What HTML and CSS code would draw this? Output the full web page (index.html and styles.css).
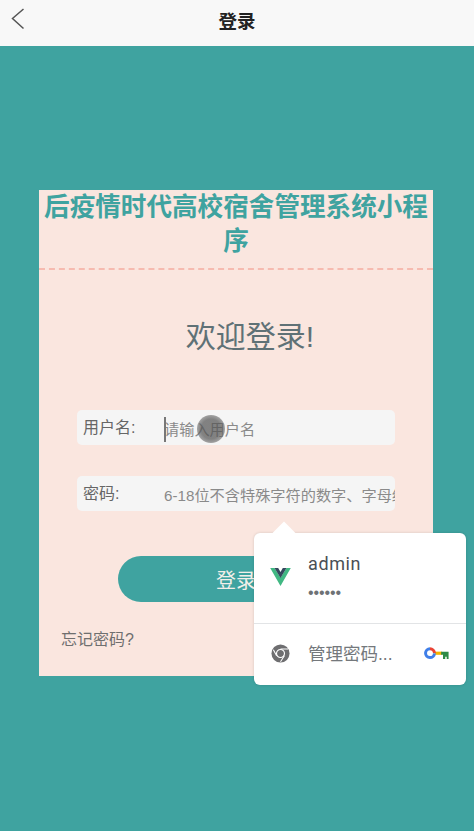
FILE: index.html
```html
<!DOCTYPE html>
<html lang="zh">
<head>
<meta charset="utf-8">
<title>登录</title>
<link rel="stylesheet" href="styles.css">
</head>
<body>
<div class="page">
  <header class="nav">
    <svg class="back" viewBox="0 0 14 22" width="14" height="22"><path d="M12.5 1 L1.5 10.5 L12.5 20.5" fill="none" stroke="#555" stroke-width="1.5"/></svg>
    <h1 class="nav-title">登录</h1>
  </header>
  <main class="main">
    <section class="card">
      <h2 class="sys-title">后疫情时代高校宿舍管理系统小程序</h2>
      <div class="card-body">
        <h3 class="welcome">欢迎登录!</h3>
        <div class="field field-user">
          <span class="label">用户名:</span>
          <span class="caret"></span>
          <span class="placeholder">请输入用户名</span>
          <span class="touch"></span>
        </div>
        <div class="field">
          <span class="label">密码:</span>
          <span class="placeholder placeholder-pw">6-18位不含特殊字符的数字、字母组合</span>
        </div>
        <button class="submit" type="button">登录</button>
        <a class="forgot">忘记密码?</a>
      </div>
    </section>
  </main>
  <aside class="popup">
    <span class="arrow"></span>
    <div class="account">
      <svg class="vue" viewBox="0 0 24 21" width="21" height="18"><path d="M0 0 H5 L12 11.5 L19 0 H24 L12 21 Z" fill="#41b883"/><path d="M5 0 H9.3 L12 4.8 L14.7 0 H19 L12 11.8 Z" fill="#35495e"/></svg>
      <div class="cred">
        <div class="user">admin</div>
        <div class="dots">••••••</div>
      </div>
    </div>
    <div class="manage">
      <svg class="chrome" viewBox="0 0 20 20" width="19" height="19">
        <circle cx="10" cy="10" r="9.5" fill="#6e6e70"/>
        <circle cx="10" cy="10" r="4.2" fill="#6e6e70" stroke="#fff" stroke-width="1.2"/>
        <path d="M10 5.2 H18 M5.9 12.4 L2.5 6 M14.1 12.4 L10 18.6" stroke="#fff" stroke-width="1.1" fill="none"/>
      </svg>
      <span class="manage-text">管理密码...</span>
      <svg class="key" viewBox="0 0 26 14" width="25" height="13">
        <rect x="11" y="5" width="8" height="3.4" fill="#f4b400"/>
        <path d="M18 5 H26 V13 H24 V10.6 H22.4 V13 H20 V8.4 H18 Z" fill="#2e8b47"/>
        <path d="M6 1.8 A5 5 0 0 1 10.8 6.5" fill="none" stroke="#ea4335" stroke-width="3.2"/>
        <path d="M10.8 6.8 A4.8 4.8 0 1 1 6 1.8" fill="none" stroke="#3f7ee8" stroke-width="3.2"/>
      </svg>
    </div>
  </aside>
</div>
</body>
</html>
```
FILE: styles.css
```css
* { box-sizing: border-box; }
html, body { margin: 0; padding: 0; height: 100%; }
body { font-family: "Liberation Sans", "Noto Sans CJK SC", sans-serif; background: #3fa3a0; }
.page { position: relative; width: 474px; height: 831px; overflow: hidden; display: flex; flex-direction: column; }
.nav { height: 46px; background: #f8f8f8; display: flex; align-items: center; justify-content: center; position: relative; flex: none; padding-bottom: 2px; }
.back { position: absolute; left: 11px; top: 8px; }
.nav-title { margin: 0; font-size: 18.5px; font-weight: 700; color: #222; line-height: 1; }
.main { flex: 1; padding: 144px 39px 0; }
.card { width: 394px; height: 486px; background: #fae6df; display: flex; flex-direction: column; }
.sys-title { margin: 0; padding: 0 0 10px; height: 80px; border-bottom: 2px dashed #f6bbb0; text-align: center; font-size: 25.6px; line-height: 34px; font-weight: 700; color: #3fa3a0; }
.card-body { padding: 0 38px; display: flex; flex-direction: column; flex: 1; }
.welcome { margin: 47px 0 0; padding-left: 28px; font-size: 30px; line-height: 40px; font-weight: 400; text-align: center; color: #5f7176; }
.field { position: relative; height: 35px; margin-top: 31px; background: #f5f5f5; border-radius: 5px; display: flex; align-items: center; padding-left: 6px; overflow: hidden; font-size: 16px; }
.field-user { margin-top: 53px; }
.label { width: 81px; flex: none; color: #666; padding-bottom: 3px; }
.placeholder { color: #8a8a8a; white-space: nowrap; font-size: 15.2px; }
.caret { position: absolute; left: 87px; top: 7px; width: 1.5px; height: 25px; background: #777; }
.touch { position: absolute; left: 120px; top: 5px; width: 28px; height: 28px; border-radius: 50%; background: radial-gradient(circle, rgba(85,85,85,.72) 50%, rgba(110,110,110,.5) 80%, rgba(120,120,120,.05) 100%); }
.submit { align-self: center; margin-top: 45px; width: 236px; height: 46px; border: 0; border-radius: 23px; background: #3fa3a0; color: #f3efe9; font-family: inherit; font-size: 20px; padding: 0; }
.forgot { margin: 27px 0 0 -16px; font-size: 16px; line-height: 22px; color: #6f6f6f; }
.popup { position: absolute; left: 254px; top: 533px; width: 212px; height: 152px; background: #fff; border-radius: 6px; box-shadow: 0 0 3px rgba(0,0,0,.15); }
.arrow { position: absolute; left: 21px; top: -9px; width: 18px; height: 18px; background: #fff; transform: rotate(45deg) scale(.9); }
.account { position: relative; height: 91px; border-bottom: 1px solid #e2e4e6; display: flex; align-items: center; padding: 0 0 2px 16px; }
.cred { margin-left: 17px; color: #4a4f55; }
.user { font-family: Roboto, "Liberation Sans", sans-serif; font-size: 18px; line-height: 22px; letter-spacing: .6px; }
.dots { margin-top: 10px; font-size: 16px; line-height: 16px; color: #6e7276; letter-spacing: -.1px; }
.manage { display: flex; align-items: center; padding: 0 17px 4px 17px; height: 60px; }
.manage-text { margin-left: 18px; font-size: 17.5px; color: #74787c; flex: 1; }
.vue { flex: none; }
.chrome { flex: none; margin-top: 3px; }
.key { flex: none; margin-top: 3px; }
```
